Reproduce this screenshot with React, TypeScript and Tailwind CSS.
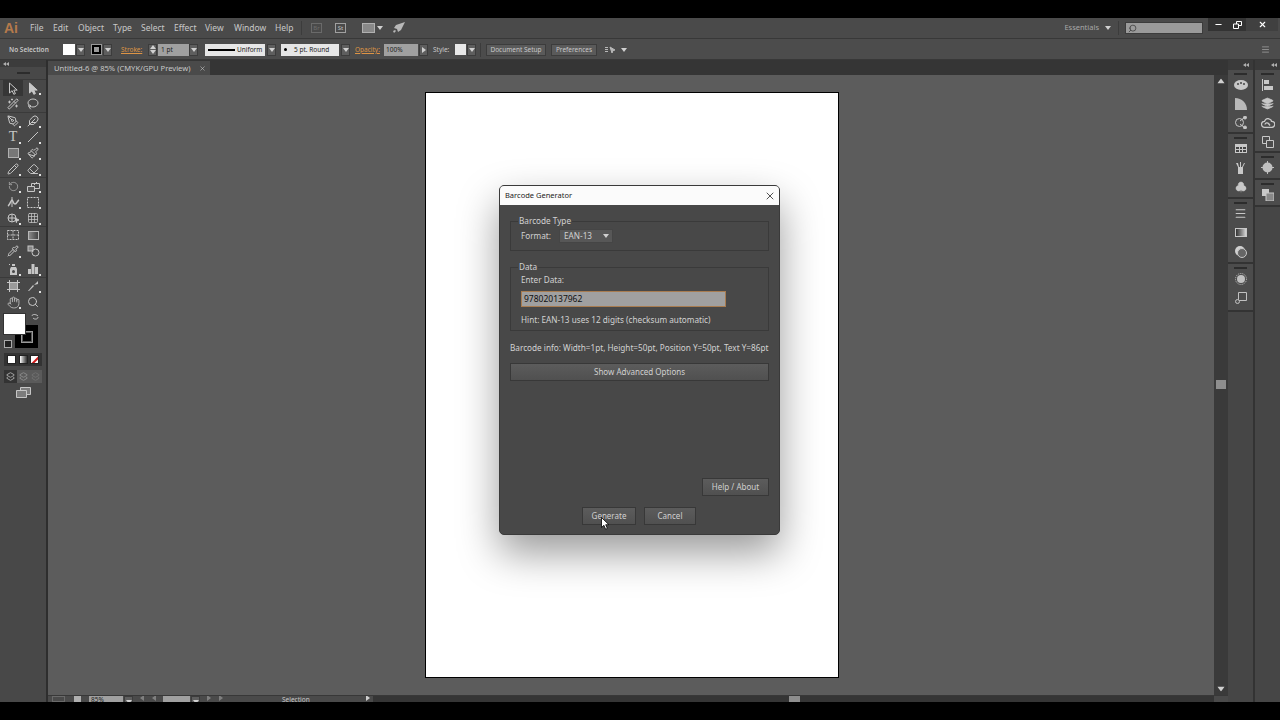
import type { ReactNode } from "react";
import {
  Wand2,
  Lasso,
  PenTool,
  Feather,
  Paintbrush,
  Pencil,
  Eraser,
  RotateCcw,
  Hand,
  Search,
  Pipette,
  Layers,
  Layers2,
  Club,
  Grid3x3,
  Menu,
  X,
  Minus,
} from "lucide-react";

const menuItems = [
  { label: "File", cls: "w-[23px]" },
  { label: "Edit", cls: "w-[25px]" },
  { label: "Object", cls: "w-[35px]" },
  { label: "Type", cls: "w-[28px]" },
  { label: "Select", cls: "w-[33px]" },
  { label: "Effect", cls: "w-[31px]" },
  { label: "View", cls: "w-[29px]" },
  { label: "Window", cls: "w-[41px]" },
  { label: "Help", cls: "w-[26px]" },
];

function Caret({ className = "" }: { className?: string }) {
  return (
    <svg width="6" height="4" viewBox="0 0 6 4" className={className}>
      <path d="M0 0h6L3 4z" fill="#d0d0d0" />
    </svg>
  );
}

function CaretButton() {
  return (
    <div className="w-[9px] h-[12px] flex items-center justify-center bg-[#5e5e5e] border border-[#3c3c3c]">
      <Caret />
    </div>
  );
}

// two small chevrons on panel headers
function Collapse({ className = "" }: { className?: string }) {
  return (
    <svg width="6" height="4" viewBox="0 0 6 4" className={className}>
      <path d="M3 0v4L0 2zM6 0v4L3 2z" fill="#b0b0b0" />
    </svg>
  );
}

function Grip() {
  return <div className="w-[13px] h-[2px] bg-[#2c2c2c] mx-auto" />;
}

function Tool({ children, flyout = true, active = false }: { children: ReactNode; flyout?: boolean; active?: boolean }) {
  return (
    <div className={`relative w-[20px] h-[16px] flex items-center justify-center text-[#c6c6c6] ${active ? "bg-[#363636]" : ""}`}>
      {children}
      {flyout && <span className="absolute right-[2px] bottom-[1px] w-[2px] h-[2px] bg-[#e0e0e0]" />}
    </div>
  );
}

function ToolRow({ children }: { children: ReactNode }) {
  return <div className="flex gap-0 pl-[3px] h-[16px]">{children}</div>;
}

function ToolSep() {
  return <div className="h-[1px] bg-[#3a3a3a]" />;
}

function SelectionIcon({ filled = false }: { filled?: boolean }) {
  return (
    <svg width="11" height="13" viewBox="0 0 11 13">
      <path d="M1.5 1v10l2.6-2.3 1.7 3.6 1.6-.7-1.6-3.500h3.400z" fill={filled ? "#c8c8c8" : "none"} stroke="#c8c8c8" strokeWidth="1" />
    </svg>
  );
}

function Toolbar() {
  const ic = { size: 12, strokeWidth: 2 };
  return (
    <aside className="w-[48px] shrink-0 bg-[#484848] border-r-2 border-[#2e2e2e] flex flex-col">
      <div className="h-[7px] pl-[3px] flex items-center bg-[#3c3c3c]">
        <Collapse />
      </div>
      <div className="h-[13px] flex items-center border-b border-[#3a3a3a]">
        <Grip />
      </div>
      <ToolRow>
        <Tool flyout={false} active><SelectionIcon /></Tool>
        <Tool><SelectionIcon filled /></Tool>
      </ToolRow>
      <ToolRow>
        <Tool flyout={false}><Wand2 {...ic} /></Tool>
        <Tool flyout={false}><Lasso {...ic} /></Tool>
      </ToolRow>
      <ToolSep />
      <ToolRow>
        <Tool><PenTool {...ic} /></Tool>
        <Tool><Feather {...ic} /></Tool>
      </ToolRow>
      <ToolRow>
        <Tool><span className="font-['Liberation_Serif',serif] text-[14px] leading-none">T</span></Tool>
        <Tool>
          <svg width="12" height="12" viewBox="0 0 12 12"><path d="M1 11 11 1" stroke="#c6c6c6" strokeWidth="1" /></svg>
        </Tool>
      </ToolRow>
      <ToolRow>
        <Tool><div className="w-[11px] h-[10px] bg-[#777777] border border-[#b0b0b0]" /></Tool>
        <Tool><Paintbrush {...ic} /></Tool>
      </ToolRow>
      <ToolRow>
        <Tool><Pencil {...ic} /></Tool>
        <Tool><Eraser {...ic} /></Tool>
      </ToolRow>
      <ToolSep />
      <ToolRow>
        <Tool><RotateCcw size={11} strokeWidth={1.5} strokeDasharray="2 2" /></Tool>
        <Tool>
          <svg width="13" height="12" viewBox="0 0 13 12" fill="none" stroke="#c6c6c6"><path d="M4.500 3.500h8v5h-8z" /><path d="M.5 6.500h7v5h-7z" fill="#555" /><path d="M7 5l3-3" /></svg>
        </Tool>
      </ToolRow>
      <ToolRow>
        <Tool>
          <svg width="13" height="12" viewBox="0 0 13 12" fill="none" stroke="#c6c6c6" strokeWidth="1.500"><path d="M1 10c2-1 3-6 4-6s1 4 3 4 2-3 4-4" /><path d="M5 1v10" strokeWidth="1" /></svg>
        </Tool>
        <Tool>
          <svg width="12" height="11" viewBox="0 0 12 11" fill="none" stroke="#c6c6c6" strokeDasharray="2 1"><path d="M.5.5h11v10H.5z" /></svg>
        </Tool>
      </ToolRow>
      <ToolRow>
        <Tool>
          <svg width="13" height="12" viewBox="0 0 13 12" fill="none" stroke="#c6c6c6"><circle cx="5" cy="6" r="4" /><path d="M1 6h8M5 2v8" /><path d="M8 6l4 2-2 .6-.6 2z" fill="#d0d0d0" /></svg>
        </Tool>
        <Tool><Grid3x3 size={12} strokeWidth={1.5} /></Tool>
      </ToolRow>
      <ToolSep />
      <ToolRow>
        <Tool flyout={false}>
          <svg width="12" height="10" viewBox="0 0 12 10" fill="none" stroke="#c6c6c6" strokeDasharray="2 1"><path d="M.5.5h11v9H.5zM.5 5h11M6 .5v9" /></svg>
        </Tool>
        <Tool flyout={false}><div className="w-[11px] h-[9px] border border-[#b8b8b8] bg-gradient-to-r from-[#8a8a8a] to-[#444444]" /></Tool>
      </ToolRow>
      <ToolRow>
        <Tool><Pipette {...ic} /></Tool>
        <Tool flyout={false}>
          <svg width="13" height="12" viewBox="0 0 13 12" fill="none" stroke="#c6c6c6"><rect x="1" y="1" width="5" height="5" fill="#888" /><circle cx="8.500" cy="7.500" r="3.500" /></svg>
        </Tool>
      </ToolRow>
      <div className="mt-[2px]">
        <ToolRow>
          <Tool>
            <svg width="11" height="13" viewBox="0 0 11 13" fill="#c6c6c6"><path d="M3 4h5l1 2v6H2V6z" /><circle cx="5.500" cy="8.500" r="1.500" fill="#484848" /><path d="M4 1h3v2H4zM1 1h1v1H1z" /></svg>
          </Tool>
          <Tool>
            <svg width="12" height="12" viewBox="0 0 12 12" fill="#c6c6c6"><path d="M1 6h3v5H1zM4.500 1h3v10h-3zM8 4h3v7H8z" /></svg>
          </Tool>
        </ToolRow>
      </div>
      <ToolSep />
      <ToolRow>
        <Tool flyout={false}>
          <svg width="13" height="12" viewBox="0 0 13 12" fill="#9a9a9a" stroke="#c6c6c6"><path d="M2.500 2.500h8v7h-8z" /><path d="M0 2.500h13M0 9.500h13M2.500 0v12M10.500 0v12" fill="none" /></svg>
        </Tool>
        <Tool>
          <svg width="12" height="12" viewBox="0 0 12 12" fill="#c6c6c6"><path d="M1 11l5-6 1 1-5 5zM7 5l4-4v3z" /></svg>
        </Tool>
      </ToolRow>
      <ToolRow>
        <Tool><Hand size={13} strokeWidth={1.5} /></Tool>
        <Tool flyout={false}><Search {...ic} /></Tool>
      </ToolRow>
      {/* fill and stroke */}
      <div className="relative h-[38px] mt-[1px]">
        <div className="absolute left-[15px] top-[14px] w-[23px] h-[23px] bg-black flex items-center justify-center">
          <div className="w-[12px] h-[12px] border border-[#9a9a9a] bg-[#555555] p-[1px]"><div className="w-full h-full bg-black" /></div>
        </div>
        <div className="absolute left-[3px] top-[2px] w-[23px] h-[22px] bg-white border border-[#333333]" />
        <svg className="absolute left-[31px] top-[2px]" width="9" height="8" viewBox="0 0 9 8" fill="none" stroke="#c6c6c6"><path d="M1 3c0-2 4-2 6 0M7 4c0 2-3 3-5 1" /></svg>
        <div className="absolute left-[4px] top-[29px] w-[8px] h-[8px] bg-[#222222] border border-[#aaaaaa]" />
      </div>
      <div className="mx-[4px] mt-[4px] h-[13px] bg-[#333333] flex items-center justify-between px-[3px]">
        <div className="w-[9px] h-[9px] bg-white border border-[#222222]" />
        <div className="w-[9px] h-[9px] border border-[#222222] bg-gradient-to-r from-white to-[#333333]" />
        <div className="relative w-[9px] h-[9px] bg-[#ffffff] overflow-hidden border border-[#222222]">
          <div className="absolute left-[-2px] top-[3px] w-[14px] h-[2px] bg-[#d01c1c] -rotate-45" />
        </div>
      </div>
      <div className="mx-[4px] mt-[4px] h-[13px] bg-[#5a5a5a] flex items-center justify-between">
        <div className="w-[13px] h-[13px] bg-[#333333] flex items-center justify-center text-[#c6c6c6]"><Layers2 size={9} /></div>
        <div className="w-[13px] flex justify-center text-[#9a9a9a]"><Layers2 size={9} /></div>
        <div className="w-[13px] flex justify-center text-[#777777]"><Layers2 size={9} /></div>
      </div>
      <div className="mt-[4px] flex justify-center">
        <svg width="15" height="11" viewBox="0 0 15 11" fill="#7c7c7c" stroke="#c6c6c6"><path d="M4.500 .5h10v7h-10z" /><path d="M.5 3.500h10v7H.5z" /></svg>
      </div>
    </aside>
  );
}

function PanelIcon({ children }: { children: ReactNode }) {
  return <div className="h-[19px] flex items-center justify-center text-[#c8c8c8]">{children}</div>;
}

function PanelGroup({ children, className = "" }: { children: ReactNode; className?: string }) {
  return (
    <div className={`pt-[3px] border-b-2 border-[#333333] bg-[#4c4c4c] ${className}`}>
      <Grip />
      {children}
    </div>
  );
}

function DockColumns() {
  const ic = { size: 13, strokeWidth: 2 };
  return (
    <div className="flex shrink-0">
      <div className="w-[27px] flex flex-col bg-[#464646] border-r-2 border-[#333333]">
        <div className="h-[10px] bg-[#3a3a3a] flex items-center justify-end pr-[4px]"><Collapse /></div>
        <PanelGroup className="h-[64px]">
          <PanelIcon>
            <svg width="14" height="10" viewBox="0 0 14 10" fill="#c8c8c8"><ellipse cx="7" cy="5" rx="7" ry="5" /><circle cx="4" cy="4" r="1" fill="#444" /><circle cx="7" cy="3" r="1" fill="#444" /><circle cx="10" cy="4" r="1" fill="#444" /></svg>
          </PanelIcon>
          <PanelIcon>
            <svg width="12" height="12" viewBox="0 0 12 12"><path d="M0 0c7 0 12 5 12 12H0z" fill="#b8b8b8" /></svg>
          </PanelIcon>
          <PanelIcon>
            <svg width="13" height="13" viewBox="0 0 13 13" fill="none" stroke="#c8c8c8"><circle cx="5.500" cy="6.500" r="4" /><path d="M6 5l5-4M6 8l5 4" /><circle cx="11" cy="1.500" r="1.500" fill="#c8c8c8" /><circle cx="11" cy="11.500" r="1.500" fill="#c8c8c8" /></svg>
          </PanelIcon>
        </PanelGroup>
        <PanelGroup className="h-[65px]">
          <PanelIcon>
            <svg width="12" height="9" viewBox="0 0 12 9" fill="#c8c8c8"><path d="M0 0h12v9H0z" /><path d="M1 3h3v2H1zM5 3h2v2H5zM8 3h3v2H8zM1 6h3v2H1zM5 6h2v2H5zM8 6h3v2H8z" fill="#444" /></svg>
          </PanelIcon>
          <PanelIcon>
            <svg width="11" height="12" viewBox="0 0 11 12" fill="#c8c8c8"><path d="M3 5h5v7H3zM1 1l2 4h1L3 1zM5 0h1v5H5zM9 1 7 5h1l2-4z" /></svg>
          </PanelIcon>
          <PanelIcon><Club size={12} fill="#c8c8c8" strokeWidth={1} /></PanelIcon>
        </PanelGroup>
        <PanelGroup className="h-[65px]">
          <PanelIcon><Menu {...ic} /></PanelIcon>
          <PanelIcon><div className="w-[12px] h-[9px] border border-[#c8c8c8] bg-gradient-to-r from-[#333333] to-[#d8d8d8]" /></PanelIcon>
          <PanelIcon>
            <svg width="12" height="12" viewBox="0 0 12 12"><circle cx="5" cy="5" r="5" fill="#d0d0d0" /><circle cx="7" cy="7" r="4.500" fill="#666" stroke="#c8c8c8" /></svg>
          </PanelIcon>
        </PanelGroup>
        <PanelGroup className="h-[48px]">
          <PanelIcon>
            <svg width="12" height="12" viewBox="0 0 12 12"><circle cx="6" cy="6" r="4" fill="#c0c0c0" /><circle cx="6" cy="6" r="5.500" fill="none" stroke="#c0c0c0" strokeDasharray="1 1" /></svg>
          </PanelIcon>
          <PanelIcon>
            <svg width="12" height="12" viewBox="0 0 12 12" fill="none" stroke="#c0c0c0"><path d="M3.500 .5h8v8h-8z" /><circle cx="2.500" cy="9.500" r="2" fill="#555" /></svg>
          </PanelIcon>
        </PanelGroup>
      </div>
      <div className="w-[25px] flex flex-col bg-[#464646]">
        <div className="h-[10px] bg-[#3a3a3a] flex items-center justify-end pr-[3px]"><Collapse /></div>
        <PanelGroup className="h-[83px]">
          <PanelIcon>
            <svg width="11" height="12" viewBox="0 0 11 12" fill="#c8c8c8"><path d="M0 0h1v12H0zM2 1h5v4H2zM2 7h9v4H2z" /></svg>
          </PanelIcon>
          <PanelIcon><Layers size={13} fill="#c8c8c8" strokeWidth={1.5} /></PanelIcon>
          <PanelIcon>
            <svg width="14" height="10" viewBox="0 0 14 10" fill="none" stroke="#c8c8c8" strokeWidth="1.300"><path d="M3.500 9.300a3 3 0 0 1 0-6C4.500 1 6.500.3 8 .8c2 .6 2.500 2 2.500 2.500a3 3 0 0 1 .5 6z" /><path d="M4 6.500a2 2 0 0 1 3.500-1l1.500 2" /></svg>
          </PanelIcon>
          <PanelIcon>
            <svg width="12" height="12" viewBox="0 0 12 12" fill="none" stroke="#c8c8c8"><path d="M.5 .5h7v7h-7z" /><path d="M4.500 4.500h7v7h-7z" fill="#4c4c4c" /></svg>
          </PanelIcon>
        </PanelGroup>
        <PanelGroup className="h-[27px]">
          <PanelIcon>
            <svg width="13" height="13" viewBox="0 0 13 13"><circle cx="6.500" cy="6.500" r="5" fill="#c0c0c0" /><path d="M6.500 0v2M6.500 11v2M0 6.500h2M11 6.500h2" stroke="#c0c0c0" /></svg>
          </PanelIcon>
        </PanelGroup>
        <PanelGroup className="h-[27px]">
          <PanelIcon>
            <svg width="12" height="12" viewBox="0 0 12 12" fill="#c8c8c8"><path d="M0 0h7v7H0z" /><path d="M4 4h8v8H4z" fill="#888" stroke="#c8c8c8" /></svg>
          </PanelIcon>
        </PanelGroup>
      </div>
    </div>
  );
}

function DialogButton({ label, className = "" }: { label: string; className?: string }) {
  return (
    <button className={`h-[18px] flex items-center justify-center bg-gradient-to-b from-[#5c5c5c] to-[#505050] border border-[#383838] text-[#d0d0d0] text-[8px] ${className}`}>
      {label}
    </button>
  );
}

function BarcodeDialog() {
  return (
    <div className="absolute left-[451px] top-[110px] w-[281px] h-[350px] flex flex-col rounded-[5px] overflow-hidden bg-[#484848] border border-[#3a3a3a] shadow-[0_18px_40px_rgba(0,0,0,0.4)] text-[#d2d2d2] text-[8.2px] font-['Noto_Sans',sans-serif]">
      <div className="h-[19px] shrink-0 flex items-center justify-between pl-[5px] pr-[3px] bg-[#fbfbfb] text-[#1a1a1a]">
        <span className="text-[7.5px]">Barcode Generator</span>
        <X size={12} strokeWidth={1.5} />
      </div>
      <div className="flex-1 flex flex-col px-[10px]">
        <fieldset className="mt-[11px] h-[35px] border border-[#3a3a3a]">
          <legend className="ml-[7px] px-[1px] leading-[10px]">Barcode Type</legend>
          <div className="flex items-center pl-[10px] h-[14px] mt-[3px]">
            <span className="w-[38px]">Format:</span>
            <div className="w-[54px] h-[14px] flex items-center justify-between pl-[4px] pr-[3px] bg-[#575757] border border-[#454545]">
              <span>EAN-13</span>
              <Caret />
            </div>
          </div>
        </fieldset>
        <fieldset className="mt-[11px] h-[69px] border border-[#3a3a3a]">
          <legend className="ml-[7px] px-[1px] leading-[10px]">Data</legend>
          <div className="pl-[10px] leading-[12px] mt-[2px]">Enter Data:</div>
          <div className="ml-[10px] mt-[5px] w-[205px] h-[16px] flex items-center pl-[2px] bg-[#a0a0a0] border border-[#a87c50] text-[#111111] text-[8.5px]">
            978020137962
          </div>
          <div className="pl-[10px] leading-[12px] mt-[7px]">Hint: EAN-13 uses 12 digits (checksum automatic)</div>
        </fieldset>
        <div className="mt-[11px] leading-[12px] whitespace-nowrap">Barcode info: Width=1pt, Height=50pt, Position Y=50pt, Text Y=86pt</div>
        <DialogButton label="Show Advanced Options" className="mt-[9px] w-full" />
        <div className="mt-auto flex justify-end">
          <DialogButton label="Help / About" className="w-[67px]" />
        </div>
        <div className="mt-[11px] mb-[9px] flex gap-[8px] pl-[72px]">
          <DialogButton label="Generate" className="w-[54px]" />
          <DialogButton label="Cancel" className="w-[52px]" />
        </div>
      </div>
      <svg className="absolute left-[101px] top-[331px]" width="9" height="13" viewBox="0 0 9 13">
        <path d="M.5.5v10l2.400-2.200 1.700 3.900 1.800-.8-1.700-3.700h3.200z" fill="#fff" stroke="#000" strokeWidth=".8" />
      </svg>
    </div>
  );
}

export default function App() {
  return (
    <div className="w-[1280px] h-[720px] bg-black flex flex-col overflow-hidden font-['Noto_Sans',sans-serif] text-[#c8c8c8] text-[8.5px]">
      <div className="h-[18px] shrink-0" />
      <div className="flex-1 min-h-0 flex flex-col">
        {/* Menu bar */}
        <header className="h-[21px] shrink-0 flex items-center bg-[#4a4a4a] border-b border-[#383838] relative">
          <span className="w-[30px] pl-[4px] text-[#b57a4c] text-[14px] font-bold font-['Liberation_Sans',sans-serif]">Ai</span>
          {menuItems.map((m) => (
            <span key={m.label} className={m.cls}>{m.label}</span>
          ))}
          <div className="w-px h-[14px] bg-[#3c3c3c] mr-[9px]" />
          <div className="w-[11px] h-[10px] border border-[#6a6a6a] text-[#6e6e6e] text-[6px] leading-[8px] text-center mr-[13px]">Br</div>
          <div className="w-[11px] h-[10px] border border-[#a0a0a0] text-[#c0c0c0] text-[6px] leading-[8px] text-center mr-[16px]">St</div>
          <div className="flex items-center gap-[2px] mr-[9px]">
            <div className="w-[13px] h-[10px] grid grid-cols-2 gap-px border border-[#b0b0b0] bg-[#888888]" />
            <Caret />
          </div>
          <svg width="13" height="12" viewBox="0 0 13 12" fill="#b8b8b8"><path d="M13 0 4 3 2 6l3 1 1 3 3-2zM1 9l2-1 1 1-2 2z" /></svg>
          <span className="ml-auto text-[7.5px] text-[#a8a8a8]">Essentials</span>
          <Caret className="ml-[6px] mr-[7px]" />
          <div className="w-px h-[14px] bg-[#3c3c3c] mr-[6px]" />
          <div className="w-[78px] h-[12px] flex items-center pl-[2px] bg-[#9a9a9a] border border-[#3c3c3c] text-[#3a3a3a] mr-[5px]">
            <Search size={9} strokeWidth={2} className="-scale-x-100" />
          </div>
          <div className="self-start flex h-[13px] pr-[2px]">
            <div className="w-[20px] bg-[#333333] flex items-center justify-center text-white"><Minus size={9} strokeWidth={3} /></div>
            <div className="w-[18px] bg-[#333333] flex items-center justify-center">
              <svg width="9" height="8" viewBox="0 0 9 8" fill="none" stroke="#fff"><path d="M3.500 .5h5v4h-5z" /><path d="M.5 3h5v4.500h-5z" fill="#333" /></svg>
            </div>
            <div className="w-[32px] bg-[#404040] flex items-center justify-center text-white"><X size={9} strokeWidth={3} /></div>
          </div>
        </header>

        {/* Control bar */}
        <div className="h-[21px] shrink-0 flex items-center pt-[1px] bg-[#4c4c4c] border-b border-[#383838] text-[6.5px]">
          <span className="w-[63px] pl-[9px] font-semibold whitespace-nowrap">No Selection</span>
          <div className="w-[12px] h-[11px] bg-white mr-[1px]" />
          <CaretButton />
          <div className="w-[11px] h-[11px] ml-[6px] mr-[1px] bg-black border border-[#999999] flex items-center justify-center">
            <div className="w-[5px] h-[5px] bg-[#999999]" />
          </div>
          <CaretButton />
          <span className="ml-[9px] w-[27px] text-[#dd9445] underline">Stroke:</span>
          <div className="w-[9px] h-[12px] bg-[#5e5e5e] border border-[#3c3c3c] flex flex-col items-center justify-center gap-px">
            <Caret className="rotate-180" />
            <Caret />
          </div>
          <div className="ml-[1px] w-[31px] h-[12px] pl-[3px] leading-[12px] bg-[#a0a0a0] text-[#222222]">1 pt</div>
          <CaretButton />
          <div className="ml-[7px] w-[60px] h-[12px] flex items-center gap-[2px] pl-[3px] bg-[#e6e6e6] text-[#222222]">
            <div className="w-[27px] h-[2px] bg-black" />Uniform
          </div>
          <div className="ml-[2px]"><CaretButton /></div>
          <div className="ml-[5px] w-[58px] h-[12px] flex items-center pl-[3px] bg-[#e6e6e6] text-[#222222]">
            <div className="w-[3px] h-[3px] rounded-full bg-black mr-[7px]" />5 pt. Round
          </div>
          <div className="ml-[2px]"><CaretButton /></div>
          <span className="ml-[5px] w-[29px] text-[#dd9445] underline">Opacity:</span>
          <div className="w-[34px] h-[12px] pl-[2px] leading-[12px] bg-[#a0a0a0] text-[#222222]">100%</div>
          <div className="ml-[1px] w-[9px] h-[12px] bg-[#5e5e5e] border border-[#3c3c3c] flex items-center justify-center"><Caret className="-rotate-90" /></div>
          <span className="ml-[5px] w-[22px]">Style:</span>
          <div className="w-[11px] h-[11px] bg-[#e8e8e8] mr-[1px]" />
          <CaretButton />
          <div className="w-px h-[14px] ml-[4px] mr-[5px] bg-[#3c3c3c]" />
          <button className="w-[60px] h-[12px] bg-[#5a5a5a] border border-[#3c3c3c] leading-[10px] whitespace-nowrap">Document Setup</button>
          <button className="ml-[5px] w-[46px] h-[12px] bg-[#5a5a5a] border border-[#3c3c3c] leading-[10px] whitespace-nowrap">Preferences</button>
          <svg className="ml-[8px]" width="11" height="9" viewBox="0 0 11 9" fill="none" stroke="#b8b8b8"><path d="M0 2.500h3M0 4.500h3M0 6.500h3" /><path d="M5 2l5 3-2 .5L7 8z" fill="#b8b8b8" /></svg>
          <Caret className="ml-[5px]" />
          <div className="ml-auto mr-[10px] text-[#c0c0c0]"><Menu size={9} strokeWidth={1.5} /></div>
        </div>

        <div className="flex-1 min-h-0 flex">
          <Toolbar />
          <div className="flex-1 min-w-0 flex flex-col">
            {/* Tab row */}
            <div className="h-[15px] shrink-0 flex bg-[#353535]">
              <div className="w-[162px] mt-[1px] flex items-center justify-between pt-[1px] pl-[6px] pr-[4px] bg-[#4a4a4a] text-[7.6px] whitespace-nowrap">
                <span>Untitled-6 @ 85% (CMYK/GPU Preview)</span>
                <X size={7} strokeWidth={2} />
              </div>
            </div>
            <div className="flex-1 min-h-0 flex relative">
              {/* Canvas */}
              <div className="flex-1 min-w-0 bg-[#5c5c5c] pt-[17px] pl-[377px]">
                <div className="w-[414px] h-[586px] bg-white border border-black" />
              </div>
              {/* Vertical scrollbar */}
              <div className="w-[14px] shrink-0 bg-[#3a3a3a] flex flex-col items-center py-[4px]">
                <Caret className="rotate-180 scale-125" />
                <div className="mt-[297px] w-[10px] h-[9px] bg-[#8e8e8e]" />
                <Caret className="mt-auto scale-125" />
              </div>
              <BarcodeDialog />
            </div>
            {/* Status bar */}
            <div className="h-[7px] shrink-0 flex items-start overflow-hidden bg-[#4a4a4a] border-t border-[#383838] text-[6.5px] leading-[8px]">
              <div className="w-[13px] ml-[4px] h-[6px] border border-[#6a6a6a]" />
              <div className="w-[7px] ml-[9px] h-[6px] bg-[#b0b0b0]" />
              <div className="ml-[8px] w-[34px] h-[6px] pl-[2px] bg-[#a0a0a0] text-[#222222]">85%</div>
              <div className="ml-[1px]"><CaretButton /></div>
              <div className="w-[30px] flex items-center justify-center gap-[6px] opacity-40">
                <Caret className="rotate-90" />
                <Caret className="rotate-90" />
              </div>
              <div className="w-[27px] h-[6px] bg-[#a0a0a0]" />
              <div className="ml-[1px]"><CaretButton /></div>
              <div className="w-[30px] flex items-center justify-center gap-[6px] opacity-40">
                <Caret className="-rotate-90" />
                <Caret className="-rotate-90" />
              </div>
              <span className="ml-[52px] w-[83px]">Selection</span>
              <Caret className="-rotate-90" />
              <div className="flex-1 h-full ml-[2px] bg-[#353535] pl-[416px]">
                <div className="w-[11px] h-[6px] bg-[#8e8e8e]" />
              </div>
              <div className="w-[14px] h-full bg-[#4a4a4a]" />
            </div>
          </div>
          <DockColumns />
        </div>
      </div>
      <div className="h-[18px] shrink-0" />
    </div>
  );
}
